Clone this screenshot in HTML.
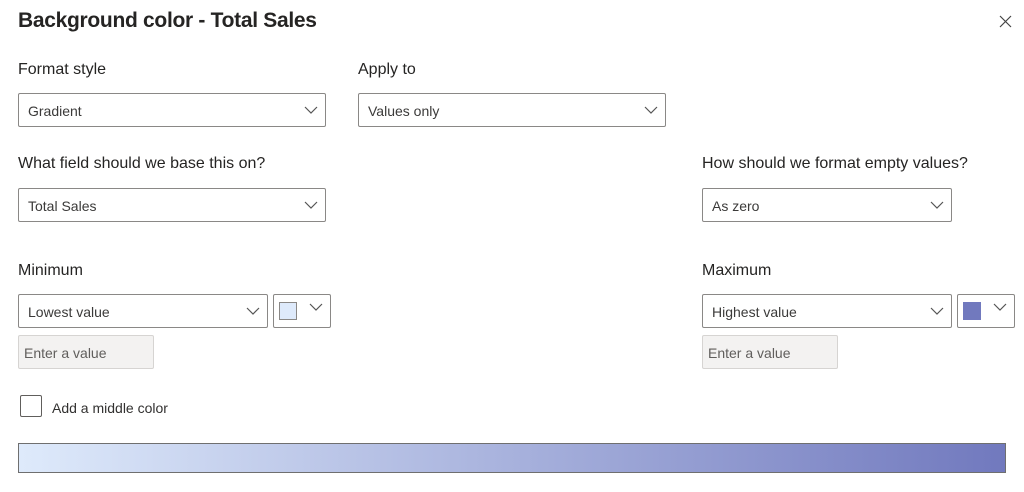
<!DOCTYPE html>
<html><head><style>
body{margin:0;width:1024px;height:492px;background:#fff;font-family:"Liberation Sans",sans-serif;color:#252423;position:relative;overflow:hidden}
.a{position:absolute}
.t{font-size:21px;left:18px;top:9px;color:#252423;font-weight:bold;letter-spacing:-0.3px}
.l{font-size:16px;color:#252423}
.dd{position:absolute;border:1px solid #8a8886;border-radius:2px;box-sizing:border-box;height:34px;font-size:14px;line-height:34px;padding-left:9px;color:#3b3a39}
.dd svg{position:absolute;right:7px;top:12px}
.ev{position:absolute;height:34px;width:136px;box-sizing:border-box;border:1px solid #d6d4d2;background:#f3f2f1;border-radius:2px;font-size:14px;line-height:34px;padding-left:5px;color:#605e5c}
.sw{position:absolute;left:5px;top:7px;width:18px;height:18px;box-sizing:border-box}
</style></head><body>
<div class="a t">Background color - Total Sales</div>
<svg class="a" style="left:999px;top:15px" width="13" height="13"><path d="M1 1L12 12M12 1L1 12" stroke="#444" stroke-width="1.2"/></svg>
<div class="a l" style="left:18px;top:61px">Format style</div>
<div class="a l" style="left:358px;top:61px">Apply to</div>
<div class="dd" style="left:18px;top:93px;width:308px">Gradient<svg width="14" height="9"><path d="M1 1l6 6 6-6" fill="none" stroke="#555" stroke-width="1.2"/></svg></div>
<div class="dd" style="left:358px;top:93px;width:308px">Values only<svg width="14" height="9"><path d="M1 1l6 6 6-6" fill="none" stroke="#555" stroke-width="1.2"/></svg></div>
<div class="a l" style="left:18px;top:155px">What field should we base this on?</div>
<div class="a l" style="left:702px;top:155px">How should we format empty values?</div>
<div class="dd" style="left:18px;top:188px;width:308px">Total Sales<svg width="14" height="9"><path d="M1 1l6 6 6-6" fill="none" stroke="#555" stroke-width="1.2"/></svg></div>
<div class="dd" style="left:702px;top:188px;width:250px">As zero<svg width="14" height="9"><path d="M1 1l6 6 6-6" fill="none" stroke="#555" stroke-width="1.2"/></svg></div>
<div class="a l" style="left:18px;top:262px">Minimum</div>
<div class="a l" style="left:702px;top:262px">Maximum</div>
<div class="dd" style="left:18px;top:294px;width:250px">Lowest value<svg width="14" height="9"><path d="M1 1l6 6 6-6" fill="none" stroke="#555" stroke-width="1.2"/></svg></div>
<div class="dd" style="left:273px;top:294px;width:58px"><div class="sw" style="background:#deeafb;border:1px solid #8a8886"></div><svg width="14" height="9" style="top:8px"><path d="M1 1l6 6 6-6" fill="none" stroke="#555" stroke-width="1.2"/></svg></div>
<div class="dd" style="left:702px;top:294px;width:250px">Highest value<svg width="14" height="9"><path d="M1 1l6 6 6-6" fill="none" stroke="#555" stroke-width="1.2"/></svg></div>
<div class="dd" style="left:957px;top:294px;width:58px"><div class="sw" style="background:#7179be"></div><svg width="14" height="9" style="top:8px"><path d="M1 1l6 6 6-6" fill="none" stroke="#555" stroke-width="1.2"/></svg></div>
<div class="ev" style="left:18px;top:335px">Enter a value</div>
<div class="ev" style="left:702px;top:335px">Enter a value</div>
<div class="a" style="left:20px;top:395px;width:22px;height:22px;box-sizing:border-box;border:1px solid #605e5c;border-radius:2px"></div>
<div class="a" style="left:52px;top:400px;font-size:14px;color:#323130">Add a middle color</div>
<div class="a" style="left:18px;top:443px;width:988px;height:30px;box-sizing:border-box;border:1px solid #6f6f6f;background:linear-gradient(to right,#deeafb,#7179be)"></div>
</body></html>
